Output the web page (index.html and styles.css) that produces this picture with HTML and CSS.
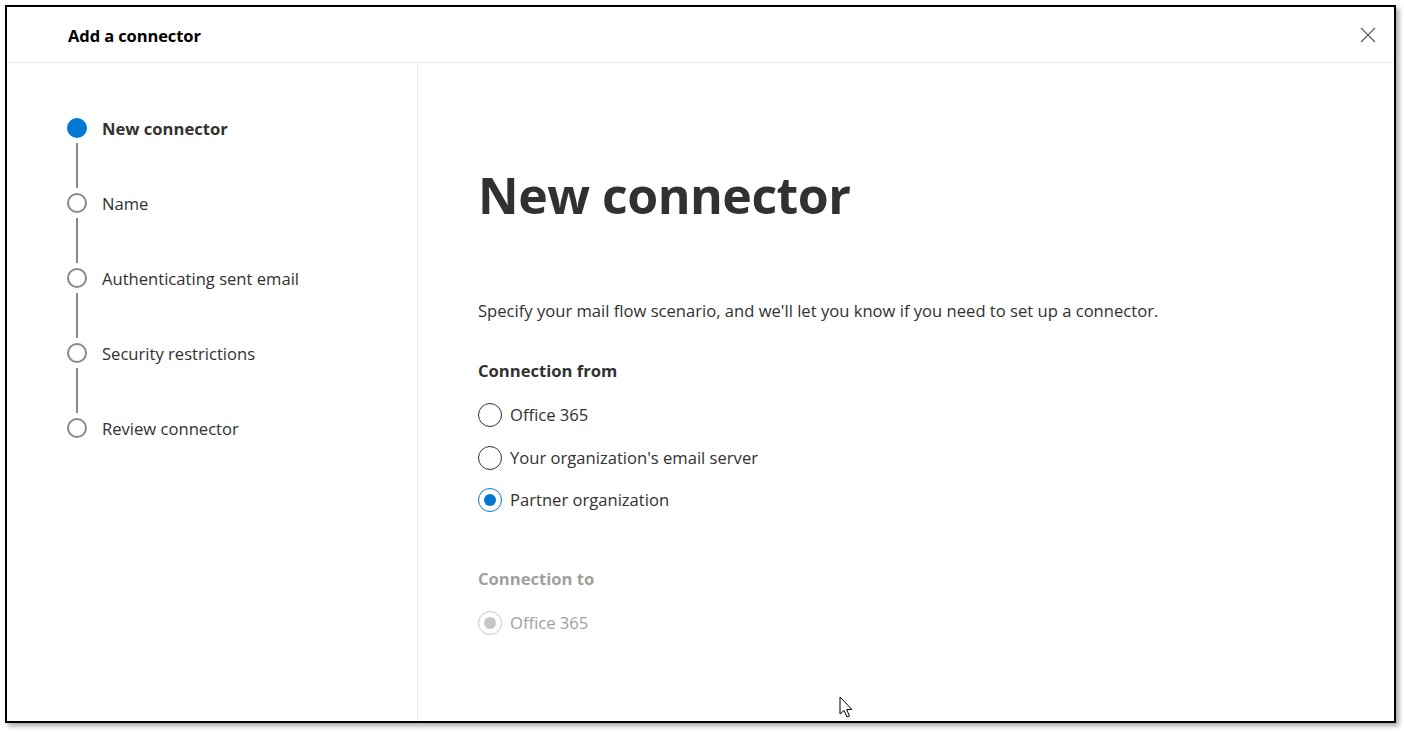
FILE: index.html
```html
<!DOCTYPE html>
<html lang="en">
  <head>
    <meta charset="UTF-8" />
    <meta name="viewport" content="width=device-width, initial-scale=1.0" />
    <title>Add a connector</title>
    <link rel="stylesheet" href="styles.css">
  </head>

  <body>
    <div id="panel">
      <div id="header">
        <h2>Add a connector</h2>
        <button id="close" aria-label="Close">
          <svg width="16" height="16" viewBox="0 0 16 16">
            <path d="M1 1 L15 15 M15 1 L1 15" stroke="#605e5c" stroke-width="1.2" fill="none" />
          </svg>
        </button>
      </div>
      <div id="body">
        <div id="steps">
          <div class="step current">
            <div class="marker"><span class="dot"></span><span class="line"></span></div>
            <span class="label">New connector</span>
          </div>
          <div class="step">
            <div class="marker"><span class="dot"></span><span class="line"></span></div>
            <span class="label">Name</span>
          </div>
          <div class="step">
            <div class="marker"><span class="dot"></span><span class="line"></span></div>
            <span class="label">Authenticating sent email</span>
          </div>
          <div class="step">
            <div class="marker"><span class="dot"></span><span class="line"></span></div>
            <span class="label">Security restrictions</span>
          </div>
          <div class="step last">
            <div class="marker"><span class="dot"></span></div>
            <span class="label">Review connector</span>
          </div>
        </div>
        <div id="content">
          <h1>New connector</h1>
          <p class="intro">Specify your mail flow scenario, and we'll let you know if you need to set up a connector.</p>

          <h3>Connection from</h3>
          <div class="options">
            <label class="option"><span class="radio"></span>Office 365</label>
            <label class="option"><span class="radio"></span>Your organization's email server</label>
            <label class="option"><span class="radio checked"></span>Partner organization</label>
          </div>

          <h3 class="disabled">Connection to</h3>
          <div class="options disabled">
            <label class="option"><span class="radio checked"></span>Office 365</label>
          </div>
        </div>
      </div>
    </div>
    <svg id="cursor" width="14" height="24" viewBox="0 0 14 24">
      <path d="M1 1 L1 18 L5 14.5 L8 21 L10.5 20 L7.6 13.6 L12.8 13.3 Z" fill="#fff" stroke="#000" stroke-width="1" stroke-linejoin="round" />
    </svg>
  </body>
</html>
```

FILE: styles.css
```css
* {
  margin: 0;
  padding: 0;
  box-sizing: border-box;
}

body {
  font-family: "Open Sans", "Noto Sans", sans-serif;
  color: #323130;
  background-color: white;
  height: 732px;
  overflow: hidden;
}

#panel {
  position: relative;
  margin: 5px 0 0 5px;
  width: 1391px;
  height: 718px;
  border: 2px solid black;
  box-shadow: 3px 3px 5px rgba(0, 0, 0, 0.35);
  display: flex;
  flex-direction: column;
}

#header {
  height: 56px;
  border-bottom: 1px solid #edebe9;
  display: flex;
  align-items: center;
  justify-content: space-between;
  padding: 2px 18px 0 61px;
}

#header h2 {
  font-size: 16.5px;
  font-weight: 700;
  color: black;
  letter-spacing: -0.1px;
}

#close {
  background: none;
  border: none;
  width: 16px;
  height: 16px;
  margin-top: -2px;
}

#body {
  flex-grow: 1;
  display: flex;
}

#steps {
  width: 411px;
  border-right: 1px solid #edebe9;
  padding: 55px 0 0 60px;
}

.step {
  display: flex;
  gap: 15px;
  height: 75px;
}

.marker {
  width: 20px;
  display: flex;
  flex-direction: column;
  align-items: center;
}

.dot {
  width: 20px;
  height: 20px;
  border-radius: 50%;
  border: 2.5px solid #8a8886;
  flex-shrink: 0;
}

.current .dot {
  background-color: #0078d4;
  border-color: #0078d4;
}

.line {
  width: 2px;
  height: 45px;
  margin-top: 5px;
  background-color: #8a8886;
}

.label {
  font-size: 16.6px;
  line-height: 21px;
  color: #323130;
}

.current .label {
  font-weight: 700;
}

#content {
  padding: 98px 0 0 60px;
}

h1 {
  font-size: 50px;
  font-weight: 700;
  line-height: 68px;
  letter-spacing: -0.5px;
  color: #323130;
}

.intro {
  margin-top: 71px;
  font-size: 16.6px;
  line-height: 22px;
}

h3 {
  margin-top: 38px;
  font-size: 16.6px;
  font-weight: 700;
  line-height: 22px;
}

h3.disabled {
  margin-top: 56px;
  color: #a19f9d;
}

.options {
  margin-top: 21px;
  display: flex;
  flex-direction: column;
  gap: 18.5px;
}

.option {
  display: flex;
  align-items: center;
  gap: 8px;
  font-size: 16.6px;
  line-height: 24px;
}

.radio {
  width: 24px;
  height: 24px;
  border-radius: 50%;
  border: 1px solid #323130;
  display: flex;
  align-items: center;
  justify-content: center;
}

.radio.checked {
  border-color: #0078d4;
}

.radio.checked::after {
  content: "";
  width: 12px;
  height: 12px;
  border-radius: 50%;
  background-color: #0078d4;
}

.options.disabled .option {
  color: #a19f9d;
}

.options.disabled .radio {
  border-color: #c8c6c4;
}

.options.disabled .radio.checked::after {
  background-color: #c8c6c4;
}

#cursor {
  position: absolute;
  left: 839px;
  top: 696px;
}
```
